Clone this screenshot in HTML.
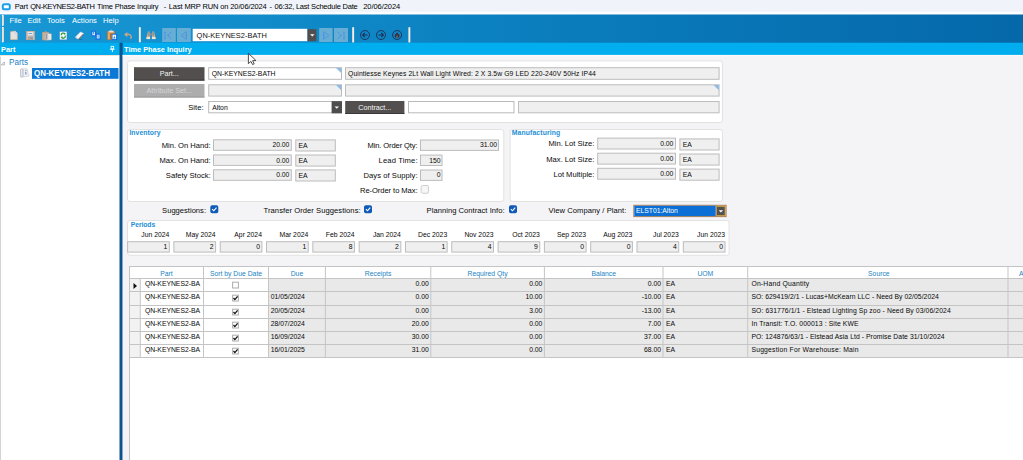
<!DOCTYPE html>
<html lang="en"><head><meta charset="utf-8"><title>Time Phase Inquiry</title>
<style>
html,body{margin:0;padding:0;}
body{width:1023px;height:460px;overflow:hidden;position:relative;background:#fff;font-family:"Liberation Sans",sans-serif;font-size:6.8px;color:#080808;}
div{position:absolute;box-sizing:border-box;white-space:nowrap;}
.t{line-height:10px;height:10px;}
.b{font-weight:bold;}
.l{font-size:7.6px;line-height:10px;height:10px;}
.inp{background:#efefef;border:1px solid #bcbcbc;}
.inpw{background:#fff;border:1px solid #b9b9b9;}
.grp{background:#fff;border:1px solid #e2e2e2;border-radius:3px;}
.btn{background:#524f4e;color:#f4f4f4;text-align:center;line-height:13.4px;font-size:7.4px;border-bottom:1px solid #3a3838;}
.btnd{background:#adadad;color:#d6d6d6;text-align:center;line-height:13.4px;font-size:7.4px;border-bottom:1px solid #9a9a9a;}
.gt{color:#1b8fd6;font-weight:bold;}
.tri{width:0;height:0;border-top:4px solid #8dbbe8;border-left:4px solid transparent;}
.cb{background:#0f63c4;border-radius:2px;}
svg.geo{position:absolute;left:0;top:0;}
</style></head>
<body>
<svg class="geo" width="1023" height="460" viewBox="0 0 1023 460">
<rect x="0" y="0" width="1023" height="14.5" fill="#f0f4fa"/>
<rect x="0" y="11.8" width="1023" height="2.7" fill="#fcfdfe"/>
<rect x="2.8" y="4.2" width="7" height="5" fill="#fff" stroke="#1aa0ea" stroke-width="2" rx="1.5"/>
<defs><linearGradient id="mg" x1="0" y1="0" x2="1" y2="0"><stop offset="0" stop-color="#1898d5"/><stop offset="0.5" stop-color="#0b7fbf"/><stop offset="1" stop-color="#0568a9"/></linearGradient></defs>
<rect x="0" y="14.5" width="1023" height="28.5" fill="url(#mg)"/>
<rect x="0" y="14.5" width="1.4" height="28.5" fill="#2aa9e6"/>
<rect x="2" y="15" width="1.6" height="10.8" fill="#fff"/>
<rect x="2" y="16" width="1.6" height="8.8" fill="#f3dfcc"/>
<rect x="2" y="27" width="1.6" height="15.4" fill="#fff"/>
<rect x="2" y="28" width="1.6" height="13.4" fill="#f3dfcc"/>
<g transform="translate(10 30.5)"><path d="M0.5 1.2 L5 0.5 L7.3 2.6 L7.3 9 L0.5 9 Z" fill="#e4e1de" stroke="#d9b9a0" stroke-width="0.7"/><path d="M5 0.5 L5 2.8 L7.3 2.8" fill="#f4f4f4" stroke="#9bbbd8" stroke-width="0.5"/></g>
<g transform="translate(26 31)"><rect x="0.4" y="0.4" width="8.2" height="8.2" fill="#c9c4c0" stroke="#d2a98a" stroke-width="0.8"/><rect x="2" y="0.8" width="5" height="3.3" fill="#e9e9ec"/><rect x="2.6" y="2" width="3.6" height="0.8" fill="#4a90d9"/><rect x="2" y="5.6" width="5" height="3" fill="#9f9fa6"/><rect x="3" y="6.8" width="1" height="1.4" fill="#f3a23a"/><rect x="5.3" y="6.4" width="1.2" height="1.4" fill="#5aa0e0"/></g>
<g transform="translate(42 30.5)"><rect x="0.6" y="2" width="6" height="7.4" fill="#b9b2aa" stroke="#c9a07c" stroke-width="0.8"/><path d="M2.2 2 Q3.6 -0.6 5 2" fill="none" stroke="#c9a07c" stroke-width="0.9"/><rect x="4" y="3.4" width="5.2" height="6" fill="#eeeeee" stroke="#d9c6b6" stroke-width="0.5"/><rect x="4.2" y="3.4" width="1.2" height="5.6" fill="#7b8794"/><rect x="6.3" y="4.6" width="0.9" height="4.6" fill="#d8d8d8"/></g>
<g transform="translate(59.5 30.5)"><rect x="0" y="0.8" width="7.5" height="8.6" fill="#f4f8fb" stroke="#2f7fd0" stroke-width="0.5"/><path d="M1.8 4.8 A2 2 0 0 1 5.4 3.4" fill="none" stroke="#2e9e3a" stroke-width="1.3"/><path d="M5.8 5.2 A2 2 0 0 1 2.2 6.8" fill="none" stroke="#2e9e3a" stroke-width="1.3"/><path d="M4.6 2.2 L6.4 3.2 L4.8 4.4 Z" fill="#2e9e3a"/><path d="M3 7.9 L1.2 6.8 L2.8 5.6 Z" fill="#2e9e3a"/></g>
<g transform="translate(75 31.4)"><path d="M0.5 5.6 L5.4 0.5 L8.6 1.9 L3.6 7.2 Z" fill="#f7f7f7" stroke="#ece3da" stroke-width="0.4"/><path d="M0.5 5.6 L3.6 7.2 L3.6 8 L0.5 6.5 Z" fill="#e6dfd8"/><path d="M3.7 7.7 L8.6 2.5" stroke="#cf5a3c" stroke-width="0.8"/><path d="M3.2 8.2 L7.4 8.2" stroke="#1d5f86" stroke-width="0.5"/></g>
<g transform="translate(91 30.5)"><rect x="0.8" y="0.7" width="3.8" height="4.6" fill="#eef4fc" stroke="#0f6fe6" stroke-width="1.2"/><rect x="2" y="1.3" width="1.3" height="2.4" fill="#5a96e8"/><rect x="5.2" y="3.6" width="3.9" height="4.9" fill="#eaf2fc" stroke="#0f6fe6" stroke-width="1.2"/><rect x="6.4" y="4.6" width="1.4" height="2.6" fill="#7fb0ee"/></g>
<g transform="translate(107 30.2)"><rect x="0.4" y="1.4" width="7.4" height="8" fill="#e2892d" stroke="#c9742a" stroke-width="0.5"/><rect x="1.6" y="0.6" width="5" height="1.7" fill="#e7ded6"/><circle cx="4.1" cy="0.6" r="0.8" fill="none" stroke="#e9e2dc" stroke-width="0.5"/><rect x="1.5" y="3" width="0.9" height="6" fill="#f5c995"/><rect x="3.2" y="3" width="0.9" height="6" fill="#b4611c"/><rect x="5" y="4" width="4.6" height="5.4" fill="#f4f8fe" stroke="#0f6fe6" stroke-width="1"/><path d="M6.2 8.4 L7.3 5.6 L8.4 8.4 Z" fill="#2f7fe6"/></g>
<g transform="translate(124 31.6)"><path d="M1.6 2.8 L4.8 2.8 A2.7 2.7 0 0 1 6.6 7.2" fill="none" stroke="#cfa688" stroke-width="1.6" stroke-opacity="0.85"/><path d="M0 3 L3.3 0.3 L3.3 5.6 Z" fill="#d4a987" fill-opacity="0.9"/></g>
<rect x="138.9" y="27.2" width="1.9" height="15.2" fill="#f8eee4"/>
<g transform="translate(146 30.8)"><path d="M1.9 0.6 L3.7 0.6 L4.3 8.3 L0.2 8.3 Z" fill="#cfae92"/><path d="M6.3 0.6 L8.1 0.6 L9.8 8.3 L5.7 8.3 Z" fill="#cfae92"/><rect x="3.8" y="2.6" width="2.4" height="2" fill="#8a8f9a"/><rect x="2.4" y="1.4" width="0.9" height="3.6" fill="#6f7f92"/><rect x="6.7" y="1.4" width="0.9" height="3.6" fill="#6f7f92"/><rect x="0.5" y="6.2" width="3.5" height="2.1" fill="#efe4d8"/><rect x="6" y="6.2" width="3.5" height="2.1" fill="#efe4d8"/></g>
<rect x="162.2" y="28" width="13.6" height="14" fill="#68add3"/>
<rect x="177" y="28" width="13.8" height="14" fill="#68add3"/>
<rect x="319.2" y="28" width="13.4" height="14" fill="#68add3"/>
<rect x="334" y="28" width="14" height="14" fill="#68add3"/>
<g transform="translate(164 31.5)"><path d="M1 0.2 L1 7.8" stroke="#4a97e2" stroke-width="1"/><path d="M7.4 0.2 L4 4 L7.4 7.8" fill="none" stroke="#4a97e2" stroke-width="1"/><circle cx="1" cy="1" r="0.8" fill="#4a97e2"/><circle cx="1" cy="7" r="0.8" fill="#4a97e2"/><circle cx="4.2" cy="4" r="0.8" fill="#4a97e2"/></g>
<g transform="translate(180.5 31.5)"><path d="M6 0.2 L0.6 4 L6 7.8 Z" fill="none" stroke="#4a97e2" stroke-width="1"/><circle cx="5.6" cy="4" r="1" fill="#6f8fb0"/></g>
<g transform="translate(322 31.5)"><path d="M1.6 0.2 L7 4 L1.6 7.8 Z" fill="none" stroke="#4a97e2" stroke-width="1"/><circle cx="2" cy="4" r="0.9" fill="#4a97e2"/></g>
<g transform="translate(337 31.5)"><path d="M7 0.2 L7 7.8" stroke="#4a97e2" stroke-width="1"/><path d="M0.6 0.2 L4 4 L0.6 7.8" fill="none" stroke="#4a97e2" stroke-width="1"/><circle cx="7" cy="1" r="0.8" fill="#4a97e2"/><circle cx="7" cy="7" r="0.8" fill="#4a97e2"/><circle cx="3.8" cy="4" r="0.8" fill="#4a97e2"/></g>
<rect x="192.7" y="28.8" width="114.8" height="12.4" fill="#fff"/>
<rect x="307.5" y="29.2" width="8.9" height="12" fill="#504e4e"/>
<g transform="translate(309.8 34)"><path d="M0.3 0.2 L4.7 0.2 L2.5 2.6 Z" fill="#fff"/></g>
<rect x="352.2" y="27.2" width="1.9" height="15.4" fill="#f8eee4"/>
<rect x="408.4" y="27.2" width="1.9" height="15.4" fill="#f8eee4"/>
<g transform="translate(359.5 29.5)"><circle cx="5.5" cy="5.5" r="4.5" fill="none" stroke="#1c2f55" stroke-width="0.9"/></g>
<g transform="translate(375.5 29.5)"><circle cx="5.5" cy="5.5" r="4.5" fill="none" stroke="#1c2f55" stroke-width="0.9"/></g>
<g transform="translate(391.6 29.5)"><circle cx="5.5" cy="5.5" r="4.5" fill="none" stroke="#1c2f55" stroke-width="0.9"/></g>
<g transform="translate(359.5 29.5)"><path d="M8 5.5 L3.2 5.5 M5.2 3.4 L3.1 5.5 L5.2 7.6" fill="none" stroke="#1c2f55" stroke-width="1.1"/></g>
<g transform="translate(375.5 29.5)"><path d="M3 5.5 L7.8 5.5 M5.8 3.4 L7.9 5.5 L5.8 7.6" fill="none" stroke="#1c2f55" stroke-width="1.1"/></g>
<g transform="translate(391.6 29.5)"><path d="M3.2 5.3 L5.5 3 L7.8 5.3 L7.8 8 L3.2 8 Z" fill="#3a3040"/><rect x="4.8" y="6" width="1.4" height="2" fill="#8a6a5a"/></g>
<rect x="0" y="42.7" width="1023" height="12.3" fill="#00adee"/>
<rect x="0" y="55" width="120" height="405" fill="#fff"/>
<rect x="0" y="55" width="119" height="1" fill="#f3e3d6"/>
<rect x="0" y="56.5" width="0.8" height="403.5" fill="#c9c9c9"/>
<g transform="translate(1 61.5)"><path d="M3.4 0.4 L3.4 3.4 L0.4 3.4 Z" fill="none" stroke="#8c8c8c" stroke-width="0.6"/></g>
<g transform="translate(20 68)"><rect x="0.6" y="0.8" width="2.4" height="8.4" rx="0.8" fill="#e9ebee" stroke="#9aa3ad" stroke-width="0.6"/><path d="M3.4 0.8 L7 0.8 L7.8 2 L7.8 5 Q9.6 6.2 8.8 8 L3.4 9 Z" fill="#f2f4f7" stroke="#b8c0ca" stroke-width="0.6"/><rect x="5" y="2.2" width="1.6" height="1" fill="#8fa4c8"/><rect x="5.2" y="4" width="1.2" height="2.6" fill="#7b8fd0"/></g>
<rect x="32" y="68" width="86.5" height="10.8" fill="#0a78d4"/>
<g transform="translate(109.5 45.5)"><rect x="1.6" y="0.8" width="2.6" height="2.6" fill="none" stroke="#fff" stroke-width="0.8"/><path d="M0.4 3.8 L5 3.8 M2.9 3.8 L2.9 6.6" stroke="#fff" stroke-width="0.9" fill="none"/></g>
<rect x="119.5" y="42.8" width="3.2" height="417.2" fill="#0b558f"/>
<rect x="122.7" y="55" width="900.3" height="405" fill="#f4f4f6"/>
<rect x="122.7" y="54.9" width="900.3" height="1.5" fill="#fbf8f5"/>
<rect x="127.5" y="60.9" width="595" height="61.6" fill="#ffffff" stroke="#e2e2e2" stroke-width="1" rx="2.5"/>
<rect x="134" y="67.2" width="70.5" height="13.4" fill="#524f4e"/>
<rect x="134" y="79.6" width="70.5" height="1" fill="#3a3838"/>
<rect x="134" y="84" width="70.5" height="13.5" fill="#adadad"/>
<rect x="134" y="96.5" width="70.5" height="1" fill="#9a9a9a"/>
<rect x="208.7" y="67.7" width="132.8" height="11.6" fill="#ffffff" stroke="#b9b9b9" stroke-width="1"/>
<rect x="345.5" y="67.7" width="373.6" height="11.6" fill="#efefef" stroke="#bcbcbc" stroke-width="1"/>
<rect x="208.7" y="84.8" width="132.8" height="11.3" fill="#efefef" stroke="#bcbcbc" stroke-width="1"/>
<rect x="345.5" y="84.8" width="373.6" height="11.3" fill="#efefef" stroke="#bcbcbc" stroke-width="1"/>
<path d="M336 67.9 L341.2 67.9 L341.2 73.1 Z" fill="#8dbbe8"/>
<path d="M336 85 L341.2 85 L341.2 90.2 Z" fill="#8dbbe8"/>
<path d="M713.6 85 L718.8 85 L718.8 90.2 Z" fill="#8dbbe8"/>
<rect x="208.7" y="101.5" width="132.8" height="11.3" fill="#ffffff" stroke="#b9b9b9" stroke-width="1"/>
<rect x="331.6" y="101.2" width="10.4" height="12.1" fill="#4d4d4d"/>
<g transform="translate(334.3 106.2)"><path d="M0.3 0.2 L4.7 0.2 L2.5 2.6 Z" fill="#fff"/></g>
<rect x="345.2" y="101" width="59.2" height="13" fill="#524f4e"/>
<rect x="345.2" y="113" width="59.2" height="1" fill="#3a3838"/>
<rect x="408.5" y="101.5" width="105.5" height="11.3" fill="#ffffff" stroke="#b9b9b9" stroke-width="1"/>
<rect x="518.5" y="101.5" width="200.6" height="11.3" fill="#efefef" stroke="#bcbcbc" stroke-width="1"/>
<rect x="127.5" y="129.5" width="376.3" height="72" fill="#ffffff" stroke="#e2e2e2" stroke-width="1" rx="2.5"/>
<rect x="213.5" y="139.8" width="77.8" height="10.5" fill="#efefef" stroke="#bcbcbc" stroke-width="1"/>
<rect x="295.8" y="139.9" width="39.5" height="11.1" fill="#efefef" stroke="#bcbcbc" stroke-width="1"/>
<rect x="213.5" y="154.9" width="77.8" height="10.5" fill="#efefef" stroke="#bcbcbc" stroke-width="1"/>
<rect x="295.8" y="155" width="39.5" height="11.1" fill="#efefef" stroke="#bcbcbc" stroke-width="1"/>
<rect x="213.5" y="169.8" width="77.8" height="10.5" fill="#efefef" stroke="#bcbcbc" stroke-width="1"/>
<rect x="295.8" y="169.9" width="39.5" height="11.1" fill="#efefef" stroke="#bcbcbc" stroke-width="1"/>
<rect x="420.5" y="140" width="78" height="10.4" fill="#efefef" stroke="#bcbcbc" stroke-width="1"/>
<rect x="420.5" y="155.1" width="21.5" height="10.4" fill="#efefef" stroke="#bcbcbc" stroke-width="1"/>
<rect x="420.5" y="170" width="21.5" height="10.4" fill="#efefef" stroke="#bcbcbc" stroke-width="1"/>
<rect x="421.1" y="185.5" width="7.4" height="7.8" fill="#f6f6f6" stroke="#cfcfcf" stroke-width="1" rx="1.5"/>
<rect x="510.2" y="129.5" width="212.3" height="72" fill="#ffffff" stroke="#e2e2e2" stroke-width="1" rx="2.5"/>
<rect x="597.7" y="138.1" width="77.8" height="10.9" fill="#efefef" stroke="#bcbcbc" stroke-width="1"/>
<rect x="679.9" y="138.9" width="39.2" height="11.1" fill="#efefef" stroke="#bcbcbc" stroke-width="1"/>
<rect x="597.7" y="153.2" width="77.8" height="10.9" fill="#efefef" stroke="#bcbcbc" stroke-width="1"/>
<rect x="679.9" y="154" width="39.2" height="11.1" fill="#efefef" stroke="#bcbcbc" stroke-width="1"/>
<rect x="597.7" y="168.3" width="77.8" height="10.9" fill="#efefef" stroke="#bcbcbc" stroke-width="1"/>
<rect x="679.9" y="169.1" width="39.2" height="11.1" fill="#efefef" stroke="#bcbcbc" stroke-width="1"/>
<rect x="210.3" y="205.2" width="8" height="8" fill="#115bb8" rx="1.8"/>
<g transform="translate(210.3 205.2)"><path d="M1.9 4 L3.5 5.6 L6.2 2.4" fill="none" stroke="#fff" stroke-width="1.1"/></g>
<rect x="364" y="205.2" width="8" height="8" fill="#115bb8" rx="1.8"/>
<g transform="translate(364 205.2)"><path d="M1.9 4 L3.5 5.6 L6.2 2.4" fill="none" stroke="#fff" stroke-width="1.1"/></g>
<rect x="509" y="205.2" width="8" height="8" fill="#115bb8" rx="1.8"/>
<g transform="translate(509 205.2)"><path d="M1.9 4 L3.5 5.6 L6.2 2.4" fill="none" stroke="#fff" stroke-width="1.1"/></g>
<rect x="633.8" y="205.3" width="92.3" height="11.3" fill="#fff" stroke="#a97c4f" stroke-width="1"/>
<rect x="634.3" y="205.8" width="81.5" height="10.3" fill="#0b6fd6"/>
<rect x="716.3" y="206.3" width="8.8" height="9.3" fill="#525252" stroke="#c9963f" stroke-width="1"/>
<g transform="translate(718.4 210)"><path d="M0.3 0.2 L4.7 0.2 L2.5 2.6 Z" fill="#fff"/></g>
<rect x="127.5" y="220.5" width="601.6" height="34.8" fill="#ffffff" stroke="#e2e2e2" stroke-width="1" rx="2.5"/>
<rect x="127.6" y="241.7" width="41.7" height="10.4" fill="#efefef" stroke="#bcbcbc" stroke-width="1"/>
<rect x="173.91" y="241.7" width="41.7" height="10.4" fill="#efefef" stroke="#bcbcbc" stroke-width="1"/>
<rect x="220.22" y="241.7" width="41.7" height="10.4" fill="#efefef" stroke="#bcbcbc" stroke-width="1"/>
<rect x="266.53" y="241.7" width="41.7" height="10.4" fill="#efefef" stroke="#bcbcbc" stroke-width="1"/>
<rect x="312.84" y="241.7" width="41.7" height="10.4" fill="#efefef" stroke="#bcbcbc" stroke-width="1"/>
<rect x="359.15" y="241.7" width="41.7" height="10.4" fill="#efefef" stroke="#bcbcbc" stroke-width="1"/>
<rect x="405.46" y="241.7" width="41.7" height="10.4" fill="#efefef" stroke="#bcbcbc" stroke-width="1"/>
<rect x="451.77" y="241.7" width="41.7" height="10.4" fill="#efefef" stroke="#bcbcbc" stroke-width="1"/>
<rect x="498.08" y="241.7" width="41.7" height="10.4" fill="#efefef" stroke="#bcbcbc" stroke-width="1"/>
<rect x="544.39" y="241.7" width="41.7" height="10.4" fill="#efefef" stroke="#bcbcbc" stroke-width="1"/>
<rect x="590.7" y="241.7" width="41.7" height="10.4" fill="#efefef" stroke="#bcbcbc" stroke-width="1"/>
<rect x="637.01" y="241.7" width="41.7" height="10.4" fill="#efefef" stroke="#bcbcbc" stroke-width="1"/>
<rect x="683.32" y="241.7" width="41.7" height="10.4" fill="#efefef" stroke="#bcbcbc" stroke-width="1"/>
<rect x="129.5" y="266.5" width="900" height="203" fill="#fff" stroke="#c4c4c4" stroke-width="1"/>
<rect x="129.4" y="267" width="893.6" height="12" fill="#fff"/>
<rect x="129.4" y="278" width="893.6" height="1" fill="#c0c0c0"/>
<rect x="129.4" y="279" width="10.9" height="12" fill="#f2f2f2"/>
<rect x="268.5" y="279" width="754.5" height="12" fill="#e9e9e9"/>
<rect x="140.3" y="279" width="128.2" height="12" fill="#fff"/>
<rect x="232.6" y="282.2" width="5.8" height="5.8" fill="#fff" stroke="#adadad" stroke-width="1"/>
<rect x="129.4" y="292" width="10.9" height="13" fill="#f2f2f2"/>
<rect x="268.5" y="292" width="754.5" height="13" fill="#e9e9e9"/>
<rect x="140.3" y="292" width="128.2" height="13" fill="#fff"/>
<rect x="232.6" y="295.2" width="5.8" height="5.8" fill="#fff" stroke="#adadad" stroke-width="1"/>
<g transform="translate(232 294.6)"><path d="M1.5 3.4 L2.9 5 L5.6 1.8" fill="none" stroke="#111" stroke-width="1.3"/></g>
<rect x="129.4" y="306" width="10.9" height="12" fill="#f2f2f2"/>
<rect x="268.5" y="306" width="754.5" height="12" fill="#e9e9e9"/>
<rect x="140.3" y="306" width="128.2" height="12" fill="#fff"/>
<rect x="232.6" y="309.2" width="5.8" height="5.8" fill="#fff" stroke="#adadad" stroke-width="1"/>
<g transform="translate(232 308.6)"><path d="M1.5 3.4 L2.9 5 L5.6 1.8" fill="none" stroke="#111" stroke-width="1.3"/></g>
<rect x="129.4" y="319" width="10.9" height="12" fill="#f2f2f2"/>
<rect x="268.5" y="319" width="754.5" height="12" fill="#e9e9e9"/>
<rect x="140.3" y="319" width="128.2" height="12" fill="#fff"/>
<rect x="232.6" y="322.2" width="5.8" height="5.8" fill="#fff" stroke="#adadad" stroke-width="1"/>
<g transform="translate(232 321.6)"><path d="M1.5 3.4 L2.9 5 L5.6 1.8" fill="none" stroke="#111" stroke-width="1.3"/></g>
<rect x="129.4" y="332" width="10.9" height="12" fill="#f2f2f2"/>
<rect x="268.5" y="332" width="754.5" height="12" fill="#e9e9e9"/>
<rect x="140.3" y="332" width="128.2" height="12" fill="#fff"/>
<rect x="232.6" y="335.2" width="5.8" height="5.8" fill="#fff" stroke="#adadad" stroke-width="1"/>
<g transform="translate(232 334.6)"><path d="M1.5 3.4 L2.9 5 L5.6 1.8" fill="none" stroke="#111" stroke-width="1.3"/></g>
<rect x="129.4" y="345" width="10.9" height="12" fill="#f2f2f2"/>
<rect x="268.5" y="345" width="754.5" height="12" fill="#e9e9e9"/>
<rect x="140.3" y="345" width="128.2" height="12" fill="#fff"/>
<rect x="232.6" y="348.2" width="5.8" height="5.8" fill="#fff" stroke="#adadad" stroke-width="1"/>
<g transform="translate(232 347.6)"><path d="M1.5 3.4 L2.9 5 L5.6 1.8" fill="none" stroke="#111" stroke-width="1.3"/></g>
<rect x="129.4" y="278" width="893.6" height="1" fill="#c4c4c4"/>
<rect x="129.4" y="291" width="893.6" height="1" fill="#c4c4c4"/>
<rect x="129.4" y="305" width="893.6" height="1" fill="#c4c4c4"/>
<rect x="129.4" y="318" width="893.6" height="1" fill="#c4c4c4"/>
<rect x="129.4" y="331" width="893.6" height="1" fill="#c4c4c4"/>
<rect x="129.4" y="344" width="893.6" height="1" fill="#c4c4c4"/>
<rect x="129.4" y="357" width="893.6" height="1" fill="#c4c4c4"/>
<rect x="139.8" y="279" width="1" height="79" fill="#c6c6c6"/>
<rect x="203" y="267" width="1" height="91" fill="#c6c6c6"/>
<rect x="268" y="267" width="1" height="91" fill="#c6c6c6"/>
<rect x="324.9" y="267" width="1" height="91" fill="#c6c6c6"/>
<rect x="430.3" y="267" width="1" height="91" fill="#c6c6c6"/>
<rect x="543.9" y="267" width="1" height="91" fill="#c6c6c6"/>
<rect x="662.5" y="267" width="1" height="91" fill="#c6c6c6"/>
<rect x="747.2" y="267" width="1" height="91" fill="#c6c6c6"/>
<rect x="1007.5" y="267" width="1" height="91" fill="#c6c6c6"/>
<rect x="129" y="266" width="1" height="194" fill="#c4c4c4"/>
<g transform="translate(133.5 283)"><path d="M0 0 L3.5 3 L0 6 Z" fill="#111"/></g>
<g transform="translate(248 53)"><path d="M0.4 0.3 L0.4 10.6 L2.9 8.4 L4.6 11.6 L6.2 10.8 L4.6 7.7 L7.9 7.5 Z" fill="#fff" stroke="#222" stroke-width="0.8" stroke-linejoin="round"/></g>
</svg>
<div class="t" style="left:14.8px;top:2.1px;font-size:7.5px;letter-spacing:-0.185px;color:#000;">Part</div>
<div class="t" style="left:30.2px;top:2.1px;font-size:7.5px;letter-spacing:-0.399px;color:#000;">QN-KEYNES2-BATH</div>
<div class="t" style="left:97px;top:2.1px;font-size:7.5px;letter-spacing:-0.167px;color:#000;">Time Phase Inquiry</div>
<div class="t" style="left:163.8px;top:2.1px;font-size:7.5px;letter-spacing:-0.098px;color:#000;">-</div>
<div class="t" style="left:168.8px;top:2.1px;font-size:7.5px;letter-spacing:-0.131px;color:#000;">Last MRP RUN on 20/06/2024</div>
<div class="t" style="left:269.6px;top:2.1px;font-size:7.5px;letter-spacing:-0.098px;color:#000;">-</div>
<div class="t" style="left:274.5px;top:2.1px;font-size:7.5px;letter-spacing:-0.217px;color:#000;">06:32, Last Schedule Date</div>
<div class="t" style="left:363.2px;top:2.1px;font-size:7.5px;letter-spacing:-0.060px;color:#000;">20/06/2024</div>
<div class="t" style="left:9.5px;top:16.4px;color:#fff;font-size:7.6px;">File</div>
<div class="t" style="left:27.5px;top:16.4px;color:#fff;font-size:7.6px;">Edit</div>
<div class="t" style="left:47px;top:16.4px;color:#fff;font-size:7.6px;">Tools</div>
<div class="t" style="left:72px;top:16.4px;color:#fff;font-size:7.6px;">Actions</div>
<div class="t" style="left:103px;top:16.4px;color:#fff;font-size:7.6px;">Help</div>
<div class="t" style="left:196.6px;top:30.6px;font-size:7.4px;letter-spacing:0.075px;color:#111;">QN-KEYNES2-BATH</div>
<div class="t b" style="left:1px;top:44.7px;color:#fff;font-size:7.4px;">Part</div>
<div class="t b" style="left:124px;top:44.7px;color:#fff;font-size:7.4px;">Time Phase Inquiry</div>
<div class="t" style="left:9.4px;top:57.4px;font-size:8.9px;transform-origin:0 50%;transform:scaleX(0.9147);color:#1b7fc4;">Parts</div>
<div class="t b" style="left:33.6px;top:68.1px;font-size:8.8px;transform-origin:0 50%;transform:scaleX(0.9055);color:#fff;">QN-KEYNES2-BATH</div>
<div class="t" style="left:134px;width:70.5px;top:69.4px;text-align:center;font-size:7.2px;color:#f4f4f4;">Part...</div>
<div class="t" style="left:134px;width:70.5px;top:86.25px;text-align:center;font-size:7.2px;color:#d6d6d6;">Attribute Set...</div>
<div class="t" style="left:211.8px;top:69.1px;">QN-KEYNES2-BATH</div>
<div class="t" style="left:348px;top:69.1px;font-size:6.8px;letter-spacing:0.102px;">Quintiesse Keynes 2Lt Wall Light Wired: 2 X 3.5w G9 LED 220-240V 50Hz IP44</div>
<div class="l" style="right:819.5px;top:103.2px;text-align:right;">Site:</div>
<div class="t" style="left:212.2px;top:102.6px;">Alton</div>
<div class="t" style="left:345.2px;width:59.2px;top:103px;text-align:center;font-size:7.2px;color:#f4f4f4;">Contract...</div>
<div class="t gt b" style="left:129.4px;top:128px;font-size:6.8px;letter-spacing:0.074px;">Inventory</div>
<div class="l" style="right:812.4px;top:140.70000000000002px;text-align:right;">Min. On Hand:</div>
<div class="t" style="right:733.6px;top:140.4px;text-align:right;">20.00</div>
<div class="t" style="left:298.5px;top:141.20000000000002px;">EA</div>
<div class="l" style="right:812.4px;top:155.8px;text-align:right;">Max. On Hand:</div>
<div class="t" style="right:733.6px;top:155.5px;text-align:right;">0.00</div>
<div class="t" style="left:298.5px;top:156.3px;">EA</div>
<div class="l" style="right:812.4px;top:170.70000000000002px;text-align:right;">Safety Stock:</div>
<div class="t" style="right:733.6px;top:170.4px;text-align:right;">0.00</div>
<div class="t" style="left:298.5px;top:171.20000000000002px;">EA</div>
<div class="l" style="left:367.5px;top:140.70000000000002px;font-size:7.6px;letter-spacing:-0.132px;">Min. Order Qty:</div>
<div class="t" style="right:526px;top:140.4px;text-align:right;">31.00</div>
<div class="l" style="left:378.5px;top:155.8px;font-size:7.6px;letter-spacing:0.167px;">Lead Time:</div>
<div class="t" style="right:582.5px;top:155.5px;text-align:right;">150</div>
<div class="l" style="left:363.5px;top:170.70000000000002px;font-size:7.6px;letter-spacing:0.062px;">Days of Supply:</div>
<div class="t" style="right:582.5px;top:170.4px;text-align:right;">0</div>
<div class="l" style="left:360px;top:186.2px;font-size:7.6px;letter-spacing:-0.074px;">Re-Order to Max:</div>
<div class="t gt b" style="left:511.8px;top:128px;font-size:6.8px;letter-spacing:0.130px;">Manufacturing</div>
<div class="l" style="right:428.6px;top:139.4px;text-align:right;">Min. Lot Size:</div>
<div class="t" style="right:349.6px;top:138.6px;text-align:right;">0.00</div>
<div class="t" style="left:682.8px;top:139.6px;">EA</div>
<div class="l" style="right:428.6px;top:154.5px;text-align:right;">Max. Lot Size:</div>
<div class="t" style="right:349.6px;top:153.7px;text-align:right;">0.00</div>
<div class="t" style="left:682.8px;top:154.7px;">EA</div>
<div class="l" style="right:428.6px;top:169.60000000000002px;text-align:right;">Lot Multiple:</div>
<div class="t" style="right:349.6px;top:168.8px;text-align:right;">0.00</div>
<div class="t" style="left:682.8px;top:169.8px;">EA</div>
<div class="l" style="right:817px;top:205.6px;text-align:right;">Suggestions:</div>
<div class="l" style="left:263.6px;top:205.6px;font-size:7.6px;letter-spacing:0.057px;">Transfer Order Suggestions:</div>
<div class="l" style="left:426.6px;top:205.6px;font-size:7.6px;letter-spacing:0.031px;">Planning Contract Info:</div>
<div class="l" style="left:548.6px;top:206.1px;font-size:7.6px;letter-spacing:0.053px;">View Company / Plant:</div>
<div class="t" style="left:635.9px;top:206.2px;color:#fff;">ELST01:Alton</div>
<div class="t gt b" style="left:130.8px;top:219.8px;font-size:6.8px;letter-spacing:-0.090px;">Periods</div>
<div class="t" style="right:853.7px;top:230px;text-align:right;">Jun 2024</div>
<div class="t" style="right:855.7px;top:241.9px;text-align:right;">1</div>
<div class="t" style="right:807.39px;top:230px;text-align:right;">May 2024</div>
<div class="t" style="right:809.39px;top:241.9px;text-align:right;">2</div>
<div class="t" style="right:761.08px;top:230px;text-align:right;">Apr 2024</div>
<div class="t" style="right:763.08px;top:241.9px;text-align:right;">0</div>
<div class="t" style="right:714.77px;top:230px;text-align:right;">Mar 2024</div>
<div class="t" style="right:716.77px;top:241.9px;text-align:right;">1</div>
<div class="t" style="right:668.46px;top:230px;text-align:right;">Feb 2024</div>
<div class="t" style="right:670.46px;top:241.9px;text-align:right;">8</div>
<div class="t" style="right:622.15px;top:230px;text-align:right;">Jan 2024</div>
<div class="t" style="right:624.15px;top:241.9px;text-align:right;">2</div>
<div class="t" style="right:575.84px;top:230px;text-align:right;">Dec 2023</div>
<div class="t" style="right:577.84px;top:241.9px;text-align:right;">1</div>
<div class="t" style="right:529.53px;top:230px;text-align:right;">Nov 2023</div>
<div class="t" style="right:531.53px;top:241.9px;text-align:right;">4</div>
<div class="t" style="right:483.22px;top:230px;text-align:right;">Oct 2023</div>
<div class="t" style="right:485.22px;top:241.9px;text-align:right;">9</div>
<div class="t" style="right:436.91px;top:230px;text-align:right;">Sep 2023</div>
<div class="t" style="right:438.91px;top:241.9px;text-align:right;">0</div>
<div class="t" style="right:390.6px;top:230px;text-align:right;">Aug 2023</div>
<div class="t" style="right:392.6px;top:241.9px;text-align:right;">0</div>
<div class="t" style="right:344.29px;top:230px;text-align:right;">Jul 2023</div>
<div class="t" style="right:346.29px;top:241.9px;text-align:right;">4</div>
<div class="t" style="right:297.98px;top:230px;text-align:right;">Jun 2023</div>
<div class="t" style="right:299.98px;top:241.9px;text-align:right;">0</div>
<div class="t" style="left:66.45px;width:200px;top:268.5px;text-align:center;color:#2283c4;">Part</div>
<div class="t" style="left:136.0px;width:200px;top:268.5px;text-align:center;color:#2283c4;">Sort by Due Date</div>
<div class="t" style="left:196.95px;width:200px;top:268.5px;text-align:center;color:#2283c4;">Due</div>
<div class="t" style="left:278.1px;width:200px;top:268.5px;text-align:center;color:#2283c4;">Receipts</div>
<div class="t" style="left:387.6px;width:200px;top:268.5px;text-align:center;color:#2283c4;">Required Qty</div>
<div class="t" style="left:503.7px;width:200px;top:268.5px;text-align:center;color:#2283c4;">Balance</div>
<div class="t" style="left:605.35px;width:200px;top:268.5px;text-align:center;color:#2283c4;">UOM</div>
<div class="t" style="left:778.85px;width:200px;top:268.5px;text-align:center;color:#2283c4;">Source</div>
<div class="t" style="left:1019px;top:268.5px;color:#2283c4;">A</div>
<div class="t" style="left:144.9px;top:279.09999999999997px;">QN-KEYNES2-BA</div>
<div class="t" style="left:270.8px;top:279.4px;"></div>
<div class="t" style="right:594.2px;top:279.4px;text-align:right;">0.00</div>
<div class="t" style="right:480.6px;top:279.4px;text-align:right;">0.00</div>
<div class="t" style="right:362px;top:279.4px;text-align:right;">0.00</div>
<div class="t" style="left:666px;top:279.4px;">EA</div>
<div class="t" style="left:751.4px;top:279.4px;font-size:6.8px;letter-spacing:0.203px;">On-Hand Quantity</div>
<div class="t" style="left:144.9px;top:292.09999999999997px;">QN-KEYNES2-BA</div>
<div class="t" style="left:270.8px;top:292.4px;">01/05/2024</div>
<div class="t" style="right:594.2px;top:292.4px;text-align:right;">0.00</div>
<div class="t" style="right:480.6px;top:292.4px;text-align:right;">10.00</div>
<div class="t" style="right:362px;top:292.4px;text-align:right;">-10.00</div>
<div class="t" style="left:666px;top:292.4px;">EA</div>
<div class="t" style="left:751.4px;top:292.4px;font-size:6.8px;letter-spacing:0.039px;">SO: 629419/2/1 - Lucas+McKearn LLC - Need By 02/05/2024</div>
<div class="t" style="left:144.9px;top:306.09999999999997px;">QN-KEYNES2-BA</div>
<div class="t" style="left:270.8px;top:306.4px;">20/05/2024</div>
<div class="t" style="right:594.2px;top:306.4px;text-align:right;">0.00</div>
<div class="t" style="right:480.6px;top:306.4px;text-align:right;">3.00</div>
<div class="t" style="right:362px;top:306.4px;text-align:right;">-13.00</div>
<div class="t" style="left:666px;top:306.4px;">EA</div>
<div class="t" style="left:751.4px;top:306.4px;font-size:6.8px;letter-spacing:0.104px;">SO: 631776/1/1 - Elstead Lighting Sp zoo - Need By 03/06/2024</div>
<div class="t" style="left:144.9px;top:319.09999999999997px;">QN-KEYNES2-BA</div>
<div class="t" style="left:270.8px;top:319.4px;">28/07/2024</div>
<div class="t" style="right:594.2px;top:319.4px;text-align:right;">20.00</div>
<div class="t" style="right:480.6px;top:319.4px;text-align:right;">0.00</div>
<div class="t" style="right:362px;top:319.4px;text-align:right;">7.00</div>
<div class="t" style="left:666px;top:319.4px;">EA</div>
<div class="t" style="left:751.4px;top:319.4px;font-size:6.8px;letter-spacing:0.114px;">In Transit: T.O. 000013 : Site KWE</div>
<div class="t" style="left:144.9px;top:332.09999999999997px;">QN-KEYNES2-BA</div>
<div class="t" style="left:270.8px;top:332.4px;">16/09/2024</div>
<div class="t" style="right:594.2px;top:332.4px;text-align:right;">30.00</div>
<div class="t" style="right:480.6px;top:332.4px;text-align:right;">0.00</div>
<div class="t" style="right:362px;top:332.4px;text-align:right;">37.00</div>
<div class="t" style="left:666px;top:332.4px;">EA</div>
<div class="t" style="left:751.4px;top:332.4px;font-size:6.8px;letter-spacing:0.065px;">PO: 124876/63/1 - Elstead Asia Ltd - Promise Date 31/10/2024</div>
<div class="t" style="left:144.9px;top:345.09999999999997px;">QN-KEYNES2-BA</div>
<div class="t" style="left:270.8px;top:345.4px;">16/01/2025</div>
<div class="t" style="right:594.2px;top:345.4px;text-align:right;">31.00</div>
<div class="t" style="right:480.6px;top:345.4px;text-align:right;">0.00</div>
<div class="t" style="right:362px;top:345.4px;text-align:right;">68.00</div>
<div class="t" style="left:666px;top:345.4px;">EA</div>
<div class="t" style="left:751.4px;top:345.4px;font-size:6.8px;letter-spacing:0.212px;">Suggestion For Warehouse: Main</div>
</body></html>
